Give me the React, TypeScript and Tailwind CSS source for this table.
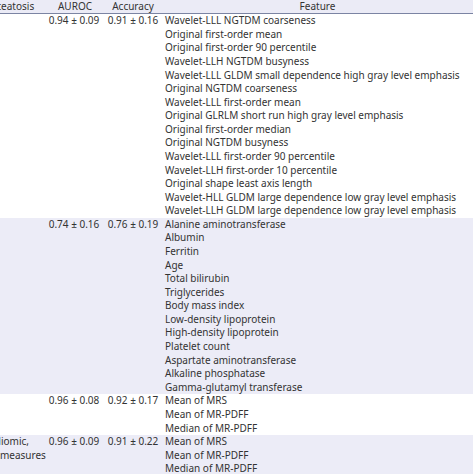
const GROUPS: { label: string[]; auroc: string; acc: string; features: string[]; shaded: boolean }[] = [
  {
    label: [],
    auroc: "0.94 ± 0.09",
    acc: "0.91 ± 0.16",
    shaded: false,
    features: [
      "Wavelet-LLL NGTDM coarseness",
      "Original first-order mean",
      "Original first-order 90 percentile",
      "Wavelet-LLH NGTDM busyness",
      "Wavelet-LLL GLDM small dependence high gray level emphasis",
      "Original NGTDM coarseness",
      "Wavelet-LLL first-order mean",
      "Original GLRLM short run high gray level emphasis",
      "Original first-order median",
      "Original NGTDM busyness",
      "Wavelet-LLL first-order 90 percentile",
      "Wavelet-LLH first-order 10 percentile",
      "Original shape least axis length",
      "Wavelet-HLL GLDM large dependence low gray level emphasis",
      "Wavelet-LLH GLDM large dependence low gray level emphasis",
    ],
  },
  {
    label: [],
    auroc: "0.74 ± 0.16",
    acc: "0.76 ± 0.19",
    shaded: true,
    features: [
      "Alanine aminotransferase",
      "Albumin",
      "Ferritin",
      "Age",
      "Total bilirubin",
      "Triglycerides",
      "Body mass index",
      "Low-density lipoprotein",
      "High-density lipoprotein",
      "Platelet count",
      "Aspartate aminotransferase",
      "Alkaline phosphatase",
      "Gamma-glutamyl transferase",
    ],
  },
  {
    label: [],
    auroc: "0.96 ± 0.08",
    acc: "0.92 ± 0.17",
    shaded: false,
    features: ["Mean of MRS", "Mean of MR-PDFF", "Median of MR-PDFF"],
  },
  {
    label: ["Radiomic,", "lab measures"],
    auroc: "0.96 ± 0.09",
    acc: "0.91 ± 0.22",
    shaded: true,
    features: ["Mean of MRS", "Mean of MR-PDFF", "Median of MR-PDFF"],
  },
];

export default function App() {
  return (
    <div
      className="w-[474px] h-[474px] overflow-hidden bg-white text-[#333333] text-[10px]"
      style={{ fontFamily: '"Noto Sans", sans-serif' }}
    >
      <div className="ml-[-17px] w-[490px]">
        {/* header */}
        <div className="grid grid-cols-[61px_60px_58px_311px] h-[14.2px] bg-[#ebebf6] border-b-[1.5px] border-[#7b84a3] leading-[12.7px]">
          <div className="pl-[9px]">Steatosis</div>
          <div className="text-center pl-[2px]">AUROC</div>
          <div className="text-center">Accuracy</div>
          <div className="text-center">Feature</div>
        </div>

        {GROUPS.map((g, gi) => (
          <div
            key={gi}
            className={`grid grid-cols-[61px_60px_58px_311px] leading-[13.58px] ${g.shaded ? "bg-[#ececf7]" : "bg-white"}`}
          >
            <div>
              {g.label.map((l) => (
                <div key={l} className="whitespace-nowrap">{l}</div>
              ))}
            </div>
            <div className="text-center">{g.auroc}</div>
            <div className="text-center">{g.acc}</div>
            <div className="pl-[3px]">
              {g.features.map((f, i) => (
                <div key={i} className="whitespace-nowrap">{f}</div>
              ))}
            </div>
          </div>
        ))}
      </div>
    </div>
  );
}
